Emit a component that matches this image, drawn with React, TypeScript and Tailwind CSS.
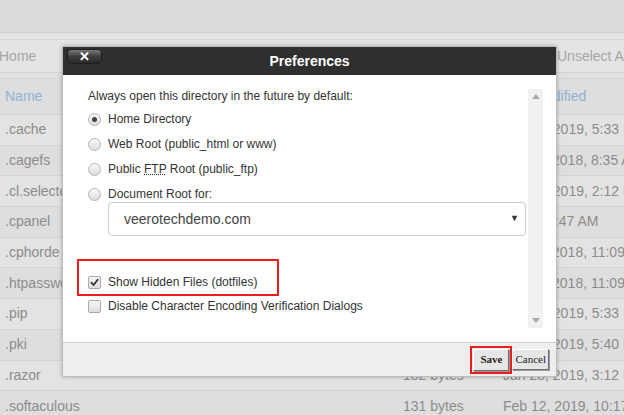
import React from "react";

const rows = [
  { name: ".cache", size: "", date: "Jan 22, 2019, 5:33 PM" },
  { name: ".cagefs", size: "", date: "Oct 30, 2018, 8:35 AM" },
  { name: ".cl.selector", size: "", date: "Jan 22, 2019, 2:12 PM" },
  { name: ".cpanel", size: "", date: "Today, 9:47 AM" },
  { name: ".cphorde", size: "", date: "Oct 30, 2018, 11:09 AM" },
  { name: ".htpasswds", size: "", date: "Oct 30, 2018, 11:09 AM" },
  { name: ".pip", size: "", date: "Jan 22, 2019, 5:33 PM" },
  { name: ".pki", size: "", date: "Jan 22, 2019, 5:40 PM" },
  { name: ".razor", size: "182 bytes", date: "Jan 28, 2019, 3:12 PM" },
  { name: ".softaculous", size: "131 bytes", date: "Feb 12, 2019, 10:17 AM" },
];

function Radio({ checked }: { checked?: boolean }) {
  return (
    <span className="w-[13px] h-[13px] rounded-full border border-[#b3b3b3] bg-gradient-to-b from-[#fafafa] to-[#dcdcdc] flex items-center justify-center shrink-0">
      {checked && <span className="w-[5px] h-[5px] rounded-full bg-[#444]" />}
    </span>
  );
}

function Checkbox({ checked }: { checked?: boolean }) {
  return (
    <span className="w-[13px] h-[13px] rounded-[2px] border border-[#a9a9a9] bg-gradient-to-b from-[#f6f6f6] to-[#dedede] flex items-center justify-center shrink-0">
      {checked && (
        <svg width="9" height="9" viewBox="0 0 10 10">
          <path d="M1.5 5.2 L4 7.8 L8.6 1.8" fill="none" stroke="#333" strokeWidth="1.9" strokeLinecap="round" strokeLinejoin="round" />
        </svg>
      )}
    </span>
  );
}

export default function App() {
  return (
    <div className="relative w-[624px] h-[415px] overflow-hidden bg-[#e2e2e2] font-['Liberation_Sans',Arial,sans-serif]">
      {/* background page */}
      <div className="h-[33px] bg-[#dcdcdc] border-b border-[#d0d0d0]" />
      <div className="h-[7px] bg-[#e3e3e3] border-b border-[#d6d6d6]" />
      <div className="h-[33px] grid grid-cols-[557px_1fr] items-center bg-[#e4e4e4] border-b border-[#d4d4d4] text-[14px] text-[#a6a6a6]">
        <span className="ml-[-1px]">Home</span>
        <span className="whitespace-nowrap">Unselect All</span>
      </div>
      <div className="h-[6px] bg-[#e0e0e0] border-b border-[#d4d4d4]" />
      <div className="h-[36px] grid grid-cols-[403px_60px_40px_1fr] items-center bg-[#dedede] border-b border-[#d2d2d2] text-[14px] text-[#90b2d4]">
        <span className="pl-[5px]">Name</span>
        <span className="text-right">Size</span>
        <span />
        <span className="whitespace-nowrap">Last Modified</span>
      </div>
      {rows.map((r, i) => (
        <div
          key={r.name}
          className={`h-[30.7px] grid grid-cols-[403px_60px_40px_1fr] items-center border-b border-[#d4d4d4] text-[14px] text-[#8c8c8c] ${
            i % 2 === 0 ? "bg-[#e3e3e3]" : "bg-[#dedede]"
          }`}
        >
          <span className="pl-[5px] whitespace-nowrap">{r.name}</span>
          <span className="text-right whitespace-nowrap">{r.size}</span>
          <span />
          <span className="whitespace-nowrap">{r.date}</span>
        </div>
      ))}

      {/* modal */}
      <div className="absolute left-[62px] top-[46px] w-[495px] h-[331px] flex flex-col border border-[#bdbdbd] shadow-[0_0_4px_rgba(0,0,0,0.25)]">
        <div className="relative h-[28px] bg-[#2f2f2f] flex items-center justify-center shrink-0">
          <span className="text-white font-bold text-[14px]">Preferences</span>
          <button className="absolute left-[4px] top-[2px] w-[35px] h-[15px] rounded-[4px] border border-[#1e1e1e] bg-gradient-to-b from-[#7a7a7a] via-[#3d3d3d] to-[#2a2a2a] flex items-center justify-center text-white font-bold text-[13px] leading-none">
            ✕
          </button>
        </div>
        <div className="relative flex-1 bg-white px-[13px] pt-[14px] pb-[14px] flex">
          <div className="flex-1 pl-[12px] text-[12px] text-[#333]">
            <div className="h-[15px] leading-[15px]">Always open this directory in the future by default:</div>
            <div className="flex flex-col gap-[11px] mt-[8px]">
              <label className="flex items-center gap-[7px] h-[14px]">
                <Radio checked />
                <span>Home Directory</span>
              </label>
              <label className="flex items-center gap-[7px] h-[14px]">
                <Radio />
                <span>Web Root (public_html or www)</span>
              </label>
              <label className="flex items-center gap-[7px] h-[14px]">
                <Radio />
                <span>
                  Public <abbr className="underline decoration-dotted">FTP</abbr> Root (public_ftp)
                </span>
              </label>
              <label className="flex items-center gap-[7px] h-[14px]">
                <Radio />
                <span>Document Root for:</span>
              </label>
            </div>
            <div className="ml-[20px] mt-[1px] h-[34px] border border-[#cccccc] rounded-[4px] flex items-center justify-between pl-[15px] pr-[6px] text-[14px] text-[#444]">
              <span>veerotechdemo.com</span>
              <span className="text-[9px] text-[#333]">▼</span>
            </div>
            <div className="flex flex-col gap-[10px] mt-[39px]">
              <label className="flex items-center gap-[7px] h-[14px]">
                <Checkbox checked />
                <span>Show Hidden Files (dotfiles)</span>
              </label>
              <label className="flex items-center gap-[7px] h-[14px]">
                <Checkbox />
                <span>Disable Character Encoding Verification Dialogs</span>
              </label>
            </div>
          </div>
          <div className="w-[15px] bg-[#f1f1f1] flex flex-col items-center justify-between py-[5px] ml-[2px]">
            <span className="w-0 h-0 border-x-[4px] border-x-transparent border-b-[5px] border-b-[#a8a8a8]" />
            <span className="w-0 h-0 border-x-[4px] border-x-transparent border-t-[5px] border-t-[#a8a8a8]" />
          </div>
          {/* annotation box */}
          <div className="absolute left-[14px] top-[184px] w-[202px] h-[37px] border-2 border-[#ee1c1c]" />
        </div>
        <div className="h-[34px] bg-[#eeeeee] border-t border-[#cfcfcf] flex items-center justify-end pr-[7px] shrink-0">
          <span className="border-2 border-[#ee1c1c] p-[1px] flex">
            <button className="h-[22px] px-[6px] bg-[#e6e6e6] border border-t-white border-l-white border-r-[#6f6f6f] border-b-[#6f6f6f] shadow-[1px_1px_0_#9a9a9a] font-['Liberation_Serif',serif] font-bold text-[11px] text-[#222]">
              Save
            </button>
          </span>
          <button className="h-[21px] px-[2px] bg-[#e6e6e6] border border-t-white border-l-white border-r-[#6f6f6f] border-b-[#6f6f6f] shadow-[1px_1px_0_#9a9a9a] font-['Liberation_Serif',serif] text-[11px] text-[#222]">
            Cancel
          </button>
        </div>
      </div>
    </div>
  );
}
